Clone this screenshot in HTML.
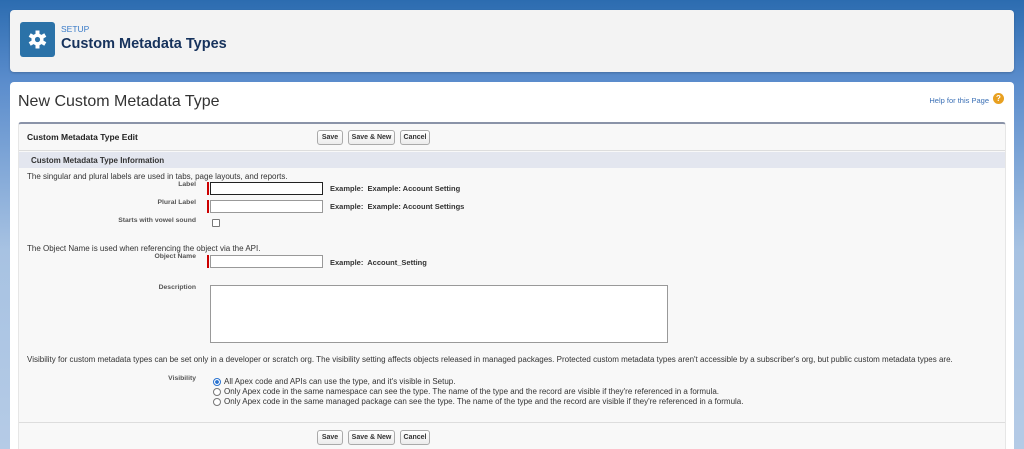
<!DOCTYPE html>
<html style="width:1024px;height:449px;overflow:hidden"><head><style>
*{box-sizing:border-box;margin:0;padding:0}
body{width:1024px;height:449px;overflow:hidden;font-family:"Liberation Sans",Arial,sans-serif;background:linear-gradient(#2c6cb0 0,#5a8ccc 80px,#a7c2e2 250px,#b5cbe6 449px);position:relative}
.hdr{position:absolute;left:10px;top:10px;width:1004px;height:62px;background:#f3f3f3;border-radius:4px;box-shadow:0 1px 2px rgba(0,0,0,.2)}
.ico{position:absolute;left:10px;top:12px;width:35px;height:35px;background:#2b72a8;border-radius:3px}
.setup{position:absolute;left:51px;top:14px;font-size:8.5px;color:#3a7bc8}
.ttl{position:absolute;left:51px;top:26px;font-size:14.5px;font-weight:bold;color:#16325c}
.main{position:absolute;left:10px;top:82px;width:1004px;height:367px;background:#fff;border-radius:4px 4px 0 0;overflow:hidden}
h1{position:absolute;left:8px;top:11px;font-size:16px;font-weight:normal;color:#333}
.help{position:absolute;right:25px;top:14px;font-size:7.5px;color:#3a6fb5}
.q{position:absolute;right:10px;top:11px;width:11px;height:11px;border-radius:50%;background:#e8a020;color:#fff;font-size:8px;font-weight:bold;text-align:center;line-height:11px}
.blk{position:absolute;left:8px;top:40px;width:988px;height:330px;background:#f8f8f8;border-top:2px solid #8a93a8;border-radius:3px;border-left:1px solid #e6e6e6;border-right:1px solid #e6e6e6}
.btn{position:absolute;height:15px;border:1px solid #aaa;border-radius:3px;background:linear-gradient(#fff,#ececec);font-size:7px;font-weight:bold;color:#333;text-align:center;line-height:13px}
.t{position:absolute;font-size:8px;color:#333;white-space:nowrap}
.lb{position:absolute;font-size:6.8px;font-weight:bold;color:#555;text-align:right;width:120px;white-space:nowrap}
.inp{position:absolute;height:13px;width:113px;border:1px solid #999;background:#fff}
.req{position:absolute;width:2px;height:13px;background:#c00}
.ex{position:absolute;font-size:7.5px;font-weight:bold;color:#333}
.rad{position:absolute;width:8px;height:8px;border-radius:50%;border:1px solid #777;background:#fff}
</style></head><body>
<div class="hdr">
<div class="ico"><svg width="35" height="35" viewBox="0 0 35 35"><g fill="#fff" transform="translate(17.5 17.5)"><circle r="6"/><g id="t"><rect x="-2" y="-9" width="4" height="4"/></g><use href="#t" transform="rotate(60)"/><use href="#t" transform="rotate(120)"/><use href="#t" transform="rotate(180)"/><use href="#t" transform="rotate(240)"/><use href="#t" transform="rotate(300)"/></g><circle cx="17.5" cy="17.5" r="2.6" fill="#2b72a8"/></svg></div>
<div class="setup">SETUP</div><div class="ttl">Custom Metadata Types</div>
</div>
<div class="main">
<h1>New Custom Metadata Type</h1>
<div class="help">Help for this Page</div><div class="q">?</div>
<div class="blk">
<div class="t" style="left:8px;top:8px;font-size:8.5px;font-weight:bold;color:#222">Custom Metadata Type Edit</div>
<div class="btn" style="left:298px;top:6px;width:26px">Save</div>
<div class="btn" style="left:329px;top:6px;width:47px">Save &amp; New</div>
<div class="btn" style="left:381px;top:6px;width:30px">Cancel</div>
<div style="position:absolute;left:0;top:26px;width:986px;height:1px;background:#ddd"></div>
<div style="position:absolute;left:0;top:28px;width:986px;height:16px;background:#e3e6ef"></div>
<div class="t" style="left:12px;top:32px;font-size:8px;font-weight:bold">Custom Metadata Type Information</div>
<div class="t" style="left:8px;top:48px">The singular and plural labels are used in tabs, page layouts, and reports.</div>
<div class="lb" style="left:57px;top:57px">Label</div>
<div class="req" style="left:188px;top:58px"></div><div class="inp" style="left:191px;top:58px;border:1.5px solid #222"></div>
<div class="ex" style="left:311px;top:60px">Example:&nbsp; Example: Account Setting</div>
<div class="lb" style="left:57px;top:75px">Plural Label</div>
<div class="req" style="left:188px;top:76px"></div><div class="inp" style="left:191px;top:76px"></div>
<div class="ex" style="left:311px;top:78px">Example:&nbsp; Example: Account Settings</div>
<div class="lb" style="left:57px;top:93px">Starts with vowel sound</div>
<div style="position:absolute;left:193px;top:95px;width:8px;height:8px;border:1px solid #777;border-radius:1px;background:#fff"></div>
<div class="t" style="left:8px;top:120px">The Object Name is used when referencing the object via the API.</div>
<div class="lb" style="left:57px;top:129px">Object Name</div>
<div class="req" style="left:188px;top:131px"></div><div class="inp" style="left:191px;top:131px"></div>
<div class="ex" style="left:311px;top:134px">Example:&nbsp; Account_Setting</div>
<div class="lb" style="left:57px;top:160px">Description</div>
<div class="inp" style="left:191px;top:161px;width:458px;height:58px"></div>
<div class="t" style="left:8px;top:231px">Visibility for custom metadata types can be set only in a developer or scratch org. The visibility setting affects objects released in managed packages. Protected custom metadata types aren't accessible by a subscriber's org, but public custom metadata types are.</div>
<div class="lb" style="left:57px;top:251px">Visibility</div>
<div class="rad" style="left:194px;top:254px;border-color:#2a73d0;background:radial-gradient(#2a73d0 40%,#fff 50%)"></div>
<div class="t" style="left:205px;top:253px">All Apex code and APIs can use the type, and it's visible in Setup.</div>
<div class="rad" style="left:194px;top:264px"></div>
<div class="t" style="left:205px;top:263px">Only Apex code in the same namespace can see the type. The name of the type and the record are visible if they're referenced in a formula.</div>
<div class="rad" style="left:194px;top:274px"></div>
<div class="t" style="left:205px;top:273px">Only Apex code in the same managed package can see the type. The name of the type and the record are visible if they're referenced in a formula.</div>
<div style="position:absolute;left:0;top:298px;width:986px;height:1px;background:#ddd"></div>
<div class="btn" style="left:298px;top:306px;width:26px">Save</div>
<div class="btn" style="left:329px;top:306px;width:47px">Save &amp; New</div>
<div class="btn" style="left:381px;top:306px;width:30px">Cancel</div>
</div>
</div>
</body></html>
